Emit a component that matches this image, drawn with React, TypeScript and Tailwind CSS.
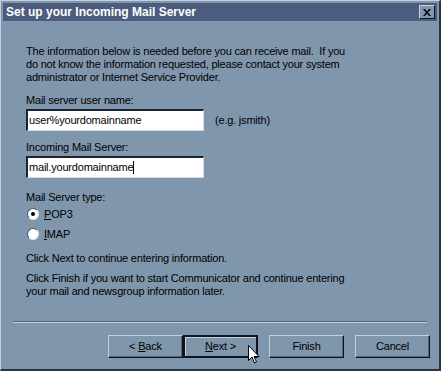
import React from 'react';

const font = { fontFamily: '"Liberation Sans", Arial, sans-serif' };

function Field({ value, caret }: { value: string; caret?: boolean }) {
  return (
    <div className="w-[178px] h-[22px] bg-white border-t-2 border-l-2 border-t-[#1c2230] border-l-[#1c2230] border-b border-r border-b-[#d4dce6] border-r-[#d4dce6] flex items-center pl-[1px] text-[11px] text-black">
      <span>{value}</span>
      {caret && <span className="w-px h-[13px] bg-black" />}
    </div>
  );
}

function Radio({ checked, label }: { checked?: boolean; label: React.ReactNode }) {
  return (
    <div className="flex items-center gap-[5px] h-[20px]">
      <div className="w-[12px] h-[12px] rounded-full bg-white border border-t-[#4a5870] border-l-[#4a5870] border-b-[#e4eaf0] border-r-[#e4eaf0] flex items-center justify-center">
        {checked && <div className="w-[4px] h-[4px] rounded-full bg-black" />}
      </div>
      <span>{label}</span>
    </div>
  );
}

function Btn({ children, isDefault }: { children: React.ReactNode; isDefault?: boolean }) {
  return (
    <div
      className={`w-[75px] h-[23px] flex items-center justify-center text-[11px] text-black bg-[#8096ad] ${
        isDefault
          ? 'border-2 border-[#10141c] shadow-[inset_1px_1px_0_#c4d0dc]'
          : 'border border-t-[#c4d0dc] border-l-[#c4d0dc] border-b-[#10141c] border-r-[#10141c] shadow-[inset_-1px_-1px_0_#56667c]'
      }`}
    >
      {children}
    </div>
  );
}

export default function App() {
  return (
    <div className="w-[441px] h-[371px] bg-[#8096ad] relative overflow-hidden border-t border-l border-t-[#c4d0dc] border-l-[#c4d0dc] border-b-2 border-r-2 border-b-[#2a3342] border-r-[#2a3342] text-black tracking-[-0.2px]" style={font}>
      <div className="mx-[2px] mt-[2px] h-[18px] bg-[#4c5c7c] flex items-center justify-between pl-[3px] pr-[2px]">
        <span className="text-white font-bold text-[12px] tracking-normal">Set up your Incoming Mail Server</span>
        <div className="w-[16px] h-[14px] bg-[#8096ad] border border-t-[#c4d0dc] border-l-[#c4d0dc] border-b-[#10141c] border-r-[#10141c] flex items-center justify-center">
          <svg width="8" height="7" viewBox="0 0 8 7">
            <path d="M0 0h2l2 2.5L6 0h2L5 3.5 8 7H6L4 4.5 2 7H0l3-3.5z" fill="#000" />
          </svg>
        </div>
      </div>

      <div className="pl-[25px] pt-[24px] text-[11px] leading-[13px]">
        <p>
          The information below is needed before you can receive mail.&nbsp; If you
          <br />
          do not know the information requested, please contact your system
          <br />
          administrator or Internet Service Provider.
        </p>

        <p className="mt-[10px] mb-[2px]">Mail server user name:</p>
        <div className="flex items-center gap-[11px]">
          <Field value="user%yourdomainname" />
          <span>(e.g. jsmith)</span>
        </div>

        <p className="mt-[10px] mb-[2px]">Incoming Mail Server:</p>
        <Field value="mail.yourdomainname" caret />

        <p className="mt-[13px]">Mail Server type:</p>
        <div className="pl-[1px]">
          <Radio checked label={<><u>P</u>OP3</>} />
          <Radio label={<><u>I</u>MAP</>} />
        </div>

        <p className="mt-[8px]">Click Next to continue entering information.</p>
        <p className="mt-[7px]">
          Click Finish if you want to start Communicator and continue entering
          <br />
          your mail and newsgroup information later.
        </p>
      </div>

      <div className="absolute left-0 right-0 top-[320px] px-[12px]">
        <div className="h-px bg-[#56667c]" />
        <div className="h-px bg-[#c4d0dc]" />
      </div>

      <div className="absolute top-[334px] left-[107px] flex">
        <Btn><span>&lt; <u>B</u>ack</span></Btn>
        <Btn isDefault><span><u>N</u>ext &gt;</span></Btn>
        <div className="w-[11px]" />
        <Btn>Finish</Btn>
        <div className="w-[11px]" />
        <Btn>Cancel</Btn>
      </div>

      <svg className="absolute left-[247px] top-[344px]" width="12" height="20" viewBox="0 0 12 20">
        <path d="M0.5 0.5v15l3.5-3.5 2.5 6 2-1-2.5-5.5H11z" fill="#fff" stroke="#000" strokeWidth="1" />
      </svg>
    </div>
  );
}
